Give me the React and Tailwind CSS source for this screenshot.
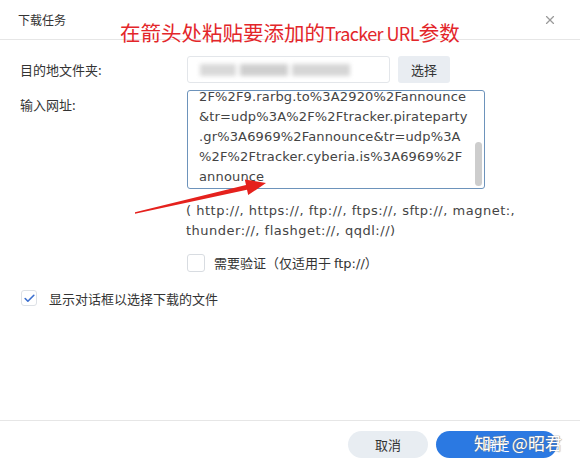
import { Check, X } from 'lucide-react'

const urlLines = [
  '2F%2F9.rarbg.to%3A2920%2Fannounce',
  '&tr=udp%3A%2F%2Ftracker.pirateparty',
  '.gr%3A6969%2Fannounce&tr=udp%3A',
  '%2F%2Ftracker.cyberia.is%3A6969%2F',
  'announce',
]

function Arrow() {
  return (
    <svg className="absolute left-0 top-0 pointer-events-none" width="580" height="468">
      <polygon
        points="135,212.3 246,184.9 244.8,179.5 266,183 248.2,195.1 247,189.7 135,213.8"
        fill="#e5211d"
      />
    </svg>
  )
}

export default function App() {
  const cjk = { fontFamily: '"Noto Sans CJK SC", "Noto Sans", sans-serif' }
  const latin = { fontFamily: '"DejaVu Sans", "Noto Sans CJK SC", sans-serif' }

  return (
    <div className="relative w-[580px] h-[468px] bg-white text-[#333] overflow-hidden" style={cjk}>
      <div className="h-[40px] border-b border-[#e6e6e6] flex items-center justify-between pl-[18px] pr-[23px]">
        <span className="text-[12px]">下载任务</span>
        <X size={14} strokeWidth={2} className="text-[#9a9a9a]" />
      </div>

      <div className="pt-[16px] pl-[20px]">
        <div className="flex items-center h-[27px]">
          <span className="w-[167px] text-[13px]">目的地文件夹:</span>
          <div className="w-[203px] h-[27px] border border-[#e3e6ea] rounded-[3px] flex items-center px-[12px] overflow-hidden">
            <div className="flex gap-[4px] blur-[2px]">
              <div className="w-[36px] h-[12px] bg-[#d9d9d9]" />
              <div className="w-[48px] h-[12px] bg-[#cfcfcf]" />
              <div className="w-[58px] h-[12px] bg-[#d6d6d6]" />
            </div>
          </div>
          <button className="ml-[8px] w-[52px] h-[27px] rounded-[3px] bg-[#e9edf2] text-[13px] text-[#333]">
            选择
          </button>
        </div>

        <div className="flex mt-[7px]">
          <span className="w-[167px] text-[13px] pt-[5px]">输入网址:</span>
          <div className="relative w-[298px] h-[99px] border border-[#6d93bb] rounded-[3px] overflow-hidden">
            <div className="-mt-[4px] pl-[11px] text-[13px] leading-[20px] text-[#444] whitespace-nowrap tracking-[0.15px]" style={latin}>
              {urlLines.map((line) => (
                <div key={line}>{line}</div>
              ))}
            </div>
            <div className="absolute right-[2px] top-[51px] w-[7px] h-[44px] rounded-full bg-[#cdcdcd]" />
          </div>
        </div>

        <div className="ml-[166px] mt-[12px] text-[13px] leading-[20px] tracking-[0.5px] text-[#444] whitespace-nowrap" style={latin}>
          <div>( http://, https://, ftp://, ftps://, sftp://, magnet:,</div>
          <div>thunder://, flashget://, qqdl://)</div>
        </div>

        <div className="ml-[167px] mt-[12px] flex items-center gap-[9px]">
          <div className="w-[18px] h-[18px] border border-[#d8dce1] rounded-[3px]" />
          <span className="text-[13px]">
            需要验证（仅适用于 <span style={latin}>ftp://</span>）
          </span>
        </div>

        <div className="mt-[15px] ml-[1px] flex items-center gap-[12px]">
          <div className="w-[16px] h-[16px] border border-[#dde1e6] rounded-[3px] flex items-center justify-center">
            <Check size={13} strokeWidth={3} className="text-[#3b6fcf]" />
          </div>
          <span className="text-[13px]">显示对话框以选择下载的文件</span>
        </div>
      </div>

      <div className="absolute left-0 right-0 top-[420px] border-t border-[#e6e6e6] flex justify-end gap-[8px] pt-[10px] pr-[23px]">
        <button className="w-[80px] h-[27px] rounded-full bg-[#e8edf2] text-[13px] text-[#333]">取消</button>
        <button className="w-[121px] h-[27px] rounded-full bg-[#2b79e2] text-[13px] text-white">确定</button>
      </div>

      <div
        className="absolute left-[120px] top-[18px] text-[20.5px] leading-[28px] text-[#e3262a] whitespace-nowrap"
        style={{ fontFamily: '"Noto Sans CJK SC", sans-serif' }}
      >
        在箭头处粘贴要添加的
        <span className="text-[18px] tracking-[-0.6px]">Tracker URL</span>
        参数
      </div>

      <div
        className="absolute left-[474px] top-[431px] text-[17px] leading-[24px] text-white"
        style={{ textShadow: '0 0 1px #777, 0 0 1px #777' }}
      >
        知乎 @昭君
      </div>

      <Arrow />
    </div>
  )
}
